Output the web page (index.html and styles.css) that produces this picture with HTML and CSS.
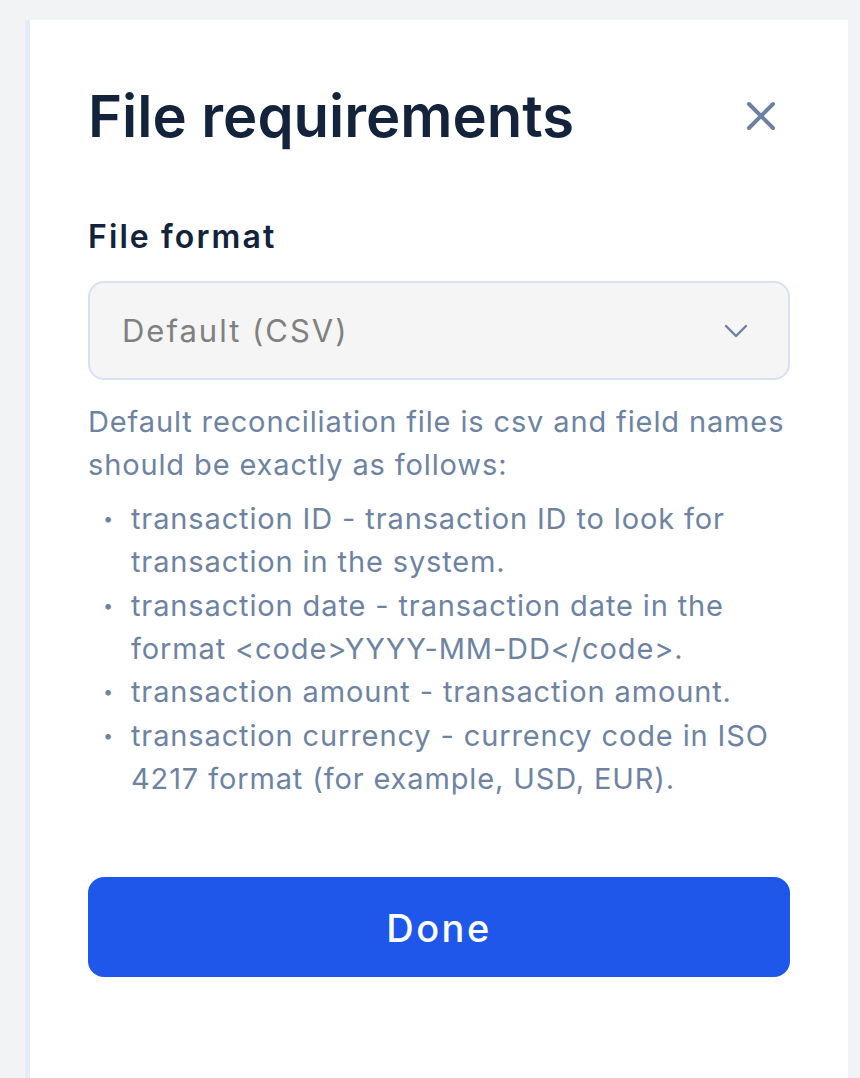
FILE: index.html
```html
<!DOCTYPE html>
<html lang="en">
<head>
<meta charset="utf-8">
<title>File requirements</title>
<link rel="stylesheet" href="styles.css">
</head>
<body>
<div class="sheet">
  <div class="header">
    <h1 class="title">File requirements</h1>
    <button class="close" aria-label="Close">
      <svg width="30" height="30" viewBox="0 0 30 30" fill="none" stroke="#6c81a1" stroke-width="4" stroke-linecap="round">
        <path d="M3 3 L27 27 M27 3 L3 27"/>
      </svg>
    </button>
  </div>
  <div class="label">File format</div>
  <div class="select">
    <span class="select-value">Default (CSV)</span>
    <svg class="chevron" width="24" height="14" viewBox="0 0 24 14" fill="none" stroke="#6c81a1" stroke-width="2.4" stroke-linecap="round" stroke-linejoin="round">
      <path d="M2 2 L12 12 L22 2"/>
    </svg>
  </div>
  <p class="desc">Default reconciliation file is csv and field names should be exactly as follows:</p>
  <ul class="list">
    <li>transaction ID - transaction ID to look for transaction in the system.</li>
    <li>transaction date - transaction date in the format &lt;code&gt;YYYY-MM-DD&lt;/code&gt;.</li>
    <li>transaction amount - transaction amount.</li>
    <li>transaction currency - currency code in ISO 4217 format (for example, USD, EUR).</li>
  </ul>
  <button class="done">Done</button>
</div>
</body>
</html>
```
FILE: styles.css
```css
html, body {
  margin: 0;
  padding: 0;
}
body {
  background: #f2f3f5;
  font-family: Inter, "Noto Sans", sans-serif;
  height: 1078px;
  overflow: hidden;
}
.sheet {
  margin: 20px 12px 0 25px;
  background: #ffffff;
  border-left: 5px solid #e4ecf8;
  min-height: 1058px;
  box-sizing: border-box;
  padding: 61px 58px 0 58px;
}
.header {
  display: flex;
  align-items: center;
  justify-content: space-between;
}
.title {
  margin: 0;
  font-size: 58px;
  line-height: 70px;
  font-weight: 600;
  color: #13233b;
}
.close {
  border: 0;
  background: none;
  padding: 0;
  margin-right: 14px;
  width: 30px;
  height: 30px;
  display: flex;
}
.label {
  margin-top: 66px;
  font-size: 32px;
  line-height: 40px;
  font-weight: 600;
  letter-spacing: 2.1px;
  color: #13233b;
}
.select {
  margin-top: 24px;
  height: 99px;
  box-sizing: border-box;
  border: 2px solid #d5e2ef;
  border-radius: 16px;
  background: #f5f5f5;
  display: flex;
  align-items: center;
  justify-content: space-between;
  padding: 0 40px 0 32px;
}
.select-value {
  font-size: 31px;
  letter-spacing: 2px;
  color: #808080;
}
.desc {
  margin: 20px 0 0;
  font-size: 29px;
  line-height: 43.4px;
  letter-spacing: 0.87px;
  color: #6e83a2;
}
.list {
  list-style: none;
  margin: 10px 0 0;
  padding: 0;
  font-size: 29px;
  line-height: 43.4px;
  letter-spacing: 0.87px;
  color: #6e83a2;
}
.list li {
  display: grid;
  grid-template-columns: 43px 1fr;
}
.list li::before {
  content: "\2022";
  width: 40px;
  text-align: center;
  font-size: 18px;
  letter-spacing: 0;
}
.done {
  display: block;
  width: 100%;
  margin-top: 76px;
  height: 100px;
  border: 0;
  border-radius: 16px;
  background: #1e57e9;
  color: #ffffff;
  font-family: Inter, "Noto Sans", sans-serif;
  font-size: 38px;
  font-weight: 500;
  letter-spacing: 2.5px;
  padding: 2px 0 0;
}
```
